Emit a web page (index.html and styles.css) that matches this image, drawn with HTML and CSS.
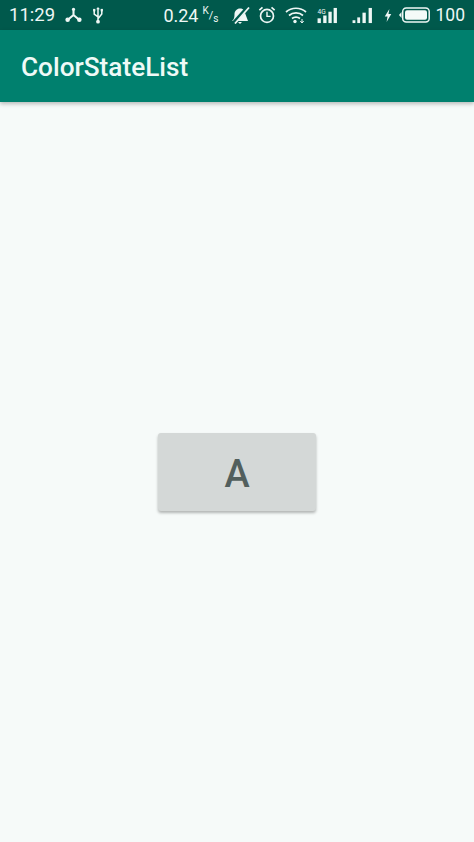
FILE: index.html
```html
<!DOCTYPE html>
<html lang="en">
<head>
    <meta charset="UTF-8">
    <meta name="viewport" content="width=device-width, initial-scale=1.0">
    <title>ColorStateList</title>
    <link rel="stylesheet" href="styles.css">
</head>
<body>
    <div class="status-bar">
        <div class="status-left">
            <span class="time">11:29</span>
            <svg class="icon-share" viewBox="0 0 18 16">
                <path d="M9 1v7M9 8L3 13M9 8l6 5" fill="none" stroke="#eef7f5" stroke-width="2.2"/>
                <circle cx="9" cy="2" r="1.6" fill="#eef7f5"/>
                <circle cx="2.8" cy="13" r="2.4" fill="#eef7f5"/>
                <circle cx="15.2" cy="13" r="2.4" fill="#eef7f5"/>
            </svg>
            <svg class="icon-usb" viewBox="0 0 12 18">
                <path d="M6 1v16M2 4v3.500L6 10.500M10 4v3.500L6 12.500" fill="none" stroke="#eef7f5" stroke-width="1.600"/>
                <path d="M6 0l2 2.500H4z" fill="#eef7f5"/>
                <circle cx="6" cy="15.500" r="2" fill="#eef7f5"/>
                <rect x="0.800" y="2" width="2.400" height="2.600" fill="#eef7f5"/>
                <rect x="8.800" y="2" width="2.400" height="2.600" fill="#eef7f5"/>
            </svg>
        </div>
        <div class="status-right">
            <span class="speed">0.24<span class="speed-unit"><sup>K</sup>/<sub>s</sub></span></span>
            <svg class="icon-bell" viewBox="0 0 20 18">
                <path d="M2 15c2-1.500 2.500-3.500 2.500-7 0-3 2.500-5.500 5.500-5.500 1.800 0 3.200.7 4 1.700L18 15z" fill="#eef7f5"/>
                <path d="M8 16h4l-2 2z" fill="#eef7f5"/>
                <path d="M3 17.500L17 2" stroke="#005b4e" stroke-width="3.400"/>
                <path d="M5 17.500L19 1.500" stroke="#eef7f5" stroke-width="1.800"/>
            </svg>
            <svg class="icon-alarm" viewBox="0 0 20 20">
                <circle cx="10" cy="11" r="7.200" fill="none" stroke="#eef7f5" stroke-width="1.900"/>
                <path d="M10 6.500V11.500H14" fill="none" stroke="#eef7f5" stroke-width="1.600"/>
                <path d="M1.500 4.500L5 1.500M18.500 4.500L15 1.500" stroke="#eef7f5" stroke-width="1.900"/>
            </svg>
            <svg class="icon-wifi" viewBox="0 0 22 18">
                <path d="M1 6c5.500-5 14.500-5 20 0M4 9.500c3.800-3.400 10.200-3.400 14 0M7 12.500c2.200-1.800 5.800-1.800 8 0" fill="none" stroke="#eef7f5" stroke-width="1.700"/>
                <circle cx="10" cy="15.500" r="1.700" fill="#eef7f5"/>
                <path d="M17 13v3.500M15.300 15l1.700 2 1.700-2" fill="none" stroke="#eef7f5" stroke-width="1"/>
            </svg>
            <svg class="icon-signal" viewBox="0 0 22 18">
                <rect x="1" y="12" width="3.500" height="5" fill="#eef7f5"/>
                <rect x="7" y="9" width="3.500" height="8" fill="#eef7f5"/>
                <rect x="12.500" y="5" width="3.500" height="12" fill="#eef7f5"/>
                <rect x="18" y="1" width="3.500" height="16" fill="#eef7f5"/>
                <text class="net-label" x="1" y="7">4G</text>
            </svg>
            <svg class="icon-signal" viewBox="0 0 22 18">
                <rect x="1" y="14" width="3" height="3" fill="#eef7f5"/>
                <rect x="6" y="11" width="3" height="6" fill="#eef7f5"/>
                <rect x="11.500" y="6" width="3.500" height="11" fill="#eef7f5"/>
                <rect x="18" y="1" width="3.500" height="16" fill="#eef7f5"/>
            </svg>
            <svg class="icon-bolt" viewBox="0 0 8 14">
                <path d="M5.500 0L0.500 8h3L2.500 14 7.500 5.500h-3z" fill="#eef7f5"/>
            </svg>
            <svg class="icon-battery" viewBox="0 0 31 16">
                <path d="M0 8l2.500-3v6z" fill="#eef7f5"/>
                <rect x="3.700" y="1" width="26.500" height="14" rx="3.500" fill="none" stroke="#eef7f5" stroke-width="1.500"/>
                <rect x="6" y="3.200" width="22" height="9.600" rx="2" fill="#f4faf8"/>
            </svg>
            <span class="battery-level">100</span>
        </div>
    </div>

    <div class="toolbar">
        <h1 class="title">ColorStateList</h1>
    </div>

    <div class="content">
        <button class="btn-a">A</button>
    </div>
</body>
</html>
```

FILE: styles.css
```css
html, body {
    height: 100%;
}
body {
    margin: 0;
    display: flex;
    flex-direction: column;
    font-family: Roboto, "Liberation Sans", sans-serif;
    background-color: #f6faf9;
    overflow: hidden;
}
.status-bar {
    height: 30px;
    display: flex;
    align-items: center;
    justify-content: space-between;
    padding: 0 9px;
    background-color: #00594c;
    color: #eef7f5;
    font-size: 18px;
    flex-shrink: 0;
}
.status-left, .status-right {
    display: flex;
    align-items: center;
}
.time {
    font-size: 18.5px;
}
.icon-share {
    width: 17px;
    height: 16px;
    margin-left: 10px;
}
.icon-usb {
    width: 12px;
    height: 17px;
    margin-left: 10px;
}
.speed {
    display: flex;
    align-items: center;
}
.speed-unit {
    font-size: 11px;
    margin-left: 4px;
}
.speed-unit sup, .speed-unit sub {
    font-size: 10px;
    line-height: 0;
}
.icon-bell {
    width: 20px;
    height: 18px;
    margin-left: 12px;
}
.icon-alarm {
    width: 18px;
    height: 18px;
    margin-left: 8px;
}
.icon-wifi {
    width: 22px;
    height: 18px;
    margin-left: 9px;
}
.icon-signal {
    width: 22px;
    height: 17px;
    margin-left: 9px;
}
.icon-signal + .icon-signal {
    margin-left: 13px;
}
.net-label {
    font-size: 7px;
    fill: #eef7f5;
}
.icon-bolt {
    width: 8px;
    height: 13px;
    margin-left: 11px;
}
.icon-battery {
    width: 31px;
    height: 16px;
    margin-left: 7px;
}
.battery-level {
    margin-left: 5px;
    font-size: 17.5px;
}
.toolbar {
    height: 72px;
    display: flex;
    align-items: center;
    padding: 1px 21px 0;
    box-sizing: border-box;
    background-color: #00806e;
    box-shadow: 0 2px 4px rgba(0,0,0,0.25);
    flex-shrink: 0;
}
.title {
    margin: 0;
    font-size: 26.2px;
    font-weight: 500;
    color: #effaf7;
}
.content {
    flex: 1;
    display: flex;
    align-items: center;
    justify-content: center;
}
.btn-a {
    width: 158px;
    height: 78px;
    padding: 3px 0 0;
    border: none;
    border-radius: 3px;
    background-color: #d4d8d7;
    color: #525f5d;
    font-family: inherit;
    font-size: 38px;
    font-weight: 500;
    box-shadow: 0 2px 3px rgba(0,0,0,0.28);
}
```
